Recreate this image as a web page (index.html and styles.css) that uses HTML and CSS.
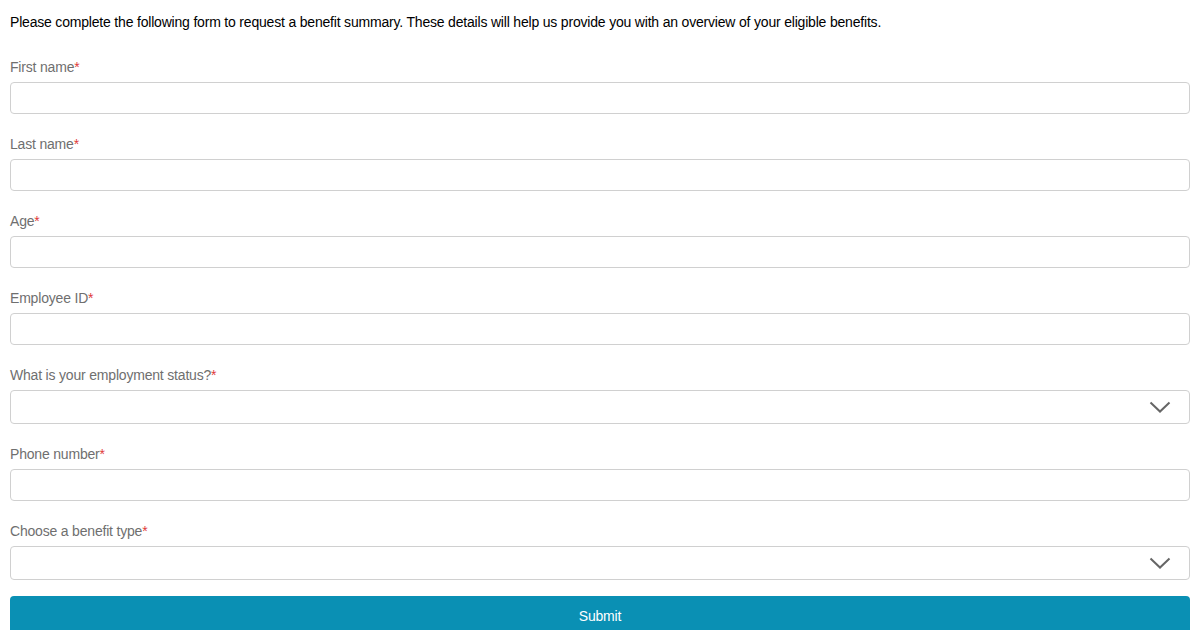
FILE: index.html
```html
<!DOCTYPE html>
<html lang="en">
<head>
<meta charset="utf-8">
<title>Benefit summary request</title>
<link rel="stylesheet" href="styles.css">
</head>
<body>
<div class="page">
  <p class="intro">Please complete the following form to request a benefit summary. These details will help us provide you with an overview of your eligible benefits.</p>
  <form class="form">
    <div class="field">
      <label class="label">First name<span class="req">*</span></label>
      <div class="input"></div>
    </div>
    <div class="field">
      <label class="label">Last name<span class="req">*</span></label>
      <div class="input"></div>
    </div>
    <div class="field">
      <label class="label">Age<span class="req">*</span></label>
      <div class="input"></div>
    </div>
    <div class="field">
      <label class="label">Employee ID<span class="req">*</span></label>
      <div class="input"></div>
    </div>
    <div class="field">
      <label class="label">What is your employment status?<span class="req">*</span></label>
      <div class="select">
        <svg class="chevron" width="22" height="12" viewBox="0 0 22 12"><path d="M1.5 1.5 L11 10.5 L20.5 1.5" fill="none" stroke="#666" stroke-width="2"/></svg>
      </div>
    </div>
    <div class="field">
      <label class="label">Phone number<span class="req">*</span></label>
      <div class="input"></div>
    </div>
    <div class="field field-last">
      <label class="label">Choose a benefit type<span class="req">*</span></label>
      <div class="select">
        <svg class="chevron" width="22" height="12" viewBox="0 0 22 12"><path d="M1.5 1.5 L11 10.5 L20.5 1.5" fill="none" stroke="#666" stroke-width="2"/></svg>
      </div>
    </div>
    <div class="submit">Submit</div>
  </form>
</div>
</body>
</html>
```
FILE: styles.css
```css
html, body {
  margin: 0;
  padding: 0;
  background: #fff;
}
body {
  font-family: "Liberation Sans", Arial, sans-serif;
  font-size: 14px;
  line-height: 16px;
  letter-spacing: -0.19px;
  color: #000;
}
.page {
  padding: 14px 10px 0 10px;
}
.intro {
  margin: 0 0 29px 0;
}
.form {
  display: flex;
  flex-direction: column;
}
.field {
  display: flex;
  flex-direction: column;
  margin-bottom: 22px;
}
.field-last {
  margin-bottom: 16px;
}
.label {
  color: #6f6f6f;
  margin-bottom: 7px;
}
.req {
  color: #e03a3a;
}
.input {
  height: 30px;
  border: 1px solid #d0d0d0;
  border-radius: 4px;
  background: #fff;
}
.select {
  height: 32px;
  border: 1px solid #d0d0d0;
  border-radius: 4px;
  background: #fff;
  display: flex;
  align-items: center;
  justify-content: flex-end;
  padding-right: 18px;
}
.chevron {
  display: block;
}
.submit {
  height: 40px;
  background: #0a90b4;
  color: #fff;
  border-radius: 4px;
  display: flex;
  align-items: center;
  justify-content: center;
}
```
